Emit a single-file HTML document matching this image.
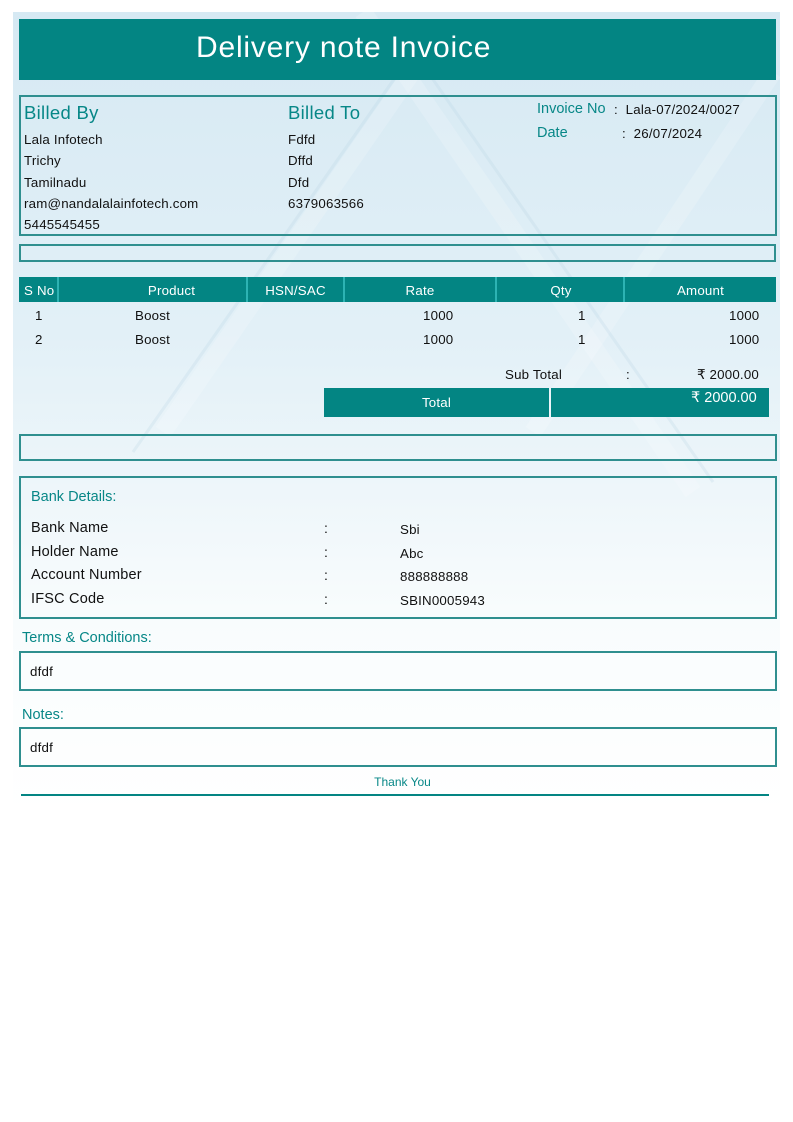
<!DOCTYPE html>
<html><head><meta charset="utf-8"><style>
*{margin:0;padding:0;box-sizing:border-box}
body{width:793px;height:1122px;background:#fff;position:relative;font-family:"Liberation Sans",sans-serif;color:#111;overflow:hidden}
.bg{position:absolute;left:13px;top:12px;width:767px;height:800px;background:linear-gradient(180deg,#d6e9f3 0%,#e2f0f7 40%,#eef6fa 60%,#f8fcfd 75%,#fff 100%)}
.a{position:absolute}
.teal{background:#038583}
.box{position:absolute;border:2px solid #2f8f8f}
.t{color:#078787}
.s{font-size:13.3px;letter-spacing:.2px}
</style></head><body>
<div class="bg"></div>
<svg class="a" style="left:13px;top:12px" width="767" height="600">
<g stroke="#ffffff" stroke-opacity=".18" stroke-width="18" fill="none">
<line x1="150" y1="420" x2="420" y2="30"/>
<line x1="350" y1="0" x2="680" y2="480"/>
<line x1="520" y1="420" x2="760" y2="60"/>
</g>
<g stroke="#b7d3e3" stroke-opacity=".25" stroke-width="3" fill="none">
<line x1="120" y1="440" x2="400" y2="40"/>
<line x1="380" y1="10" x2="700" y2="470"/>
</g>
</svg>
<div class="a teal" style="left:19px;top:19px;width:757px;height:61px"></div>
<div class="a" style="left:196px;top:31px;font-size:30px;letter-spacing:.8px;color:#fff">Delivery note Invoice</div>

<div class="box" style="left:19px;top:95px;width:758px;height:141px"></div>
<div class="a t" style="left:24px;top:102px;font-size:18.5px;letter-spacing:.3px">Billed By</div>
<div class="a s" style="left:24px;top:129px;line-height:21.3px">Lala Infotech<br>Trichy<br>Tamilnadu<br>ram@nandalalainfotech.com<br>5445545455</div>
<div class="a t" style="left:288px;top:102px;font-size:18.5px;letter-spacing:.3px">Billed To</div>
<div class="a s" style="left:288px;top:129px;line-height:21.3px">Fdfd<br>Dffd<br>Dfd<br>6379063566</div>
<div class="a t" style="left:537px;top:101px;font-size:14.5px">Invoice No</div>
<div class="a s" style="left:614px;top:102px">:&nbsp; Lala-07/2024/0027</div>
<div class="a t" style="left:537px;top:125px;font-size:14.5px">Date</div>
<div class="a s" style="left:622px;top:126px">:&nbsp; 26/07/2024</div>

<div class="box" style="left:19px;top:244px;width:757px;height:18px"></div>

<div class="a teal" style="left:19px;top:277px;width:757px;height:25px"></div>
<div class="a" style="left:57px;top:277px;width:2px;height:25px;background:#2db3b3"></div>
<div class="a" style="left:246px;top:277px;width:2px;height:25px;background:#2db3b3"></div>
<div class="a" style="left:343px;top:277px;width:2px;height:25px;background:#2db3b3"></div>
<div class="a" style="left:495px;top:277px;width:2px;height:25px;background:#2db3b3"></div>
<div class="a" style="left:623px;top:277px;width:2px;height:25px;background:#2db3b3"></div>
<div class="a s" style="left:19px;top:283px;width:757px;color:#fff;height:20px">
<span class="a" style="left:5px">S No</span>
<span class="a" style="left:59px;width:187px;text-align:center">Product</span>
<span class="a" style="left:229px;width:95px;text-align:center">HSN/SAC</span>
<span class="a" style="left:326px;width:150px;text-align:center">Rate</span>
<span class="a" style="left:478px;width:128px;text-align:center">Qty</span>
<span class="a" style="left:606px;width:151px;text-align:center">Amount</span>
</div>
<div class="a s" style="left:35px;top:308px">1</div>
<div class="a s" style="left:135px;top:308px">Boost</div>
<div class="a s" style="left:423px;top:308px">1000</div>
<div class="a s" style="left:578px;top:308px">1</div>
<div class="a s" style="left:729px;top:308px">1000</div>
<div class="a s" style="left:35px;top:332px">2</div>
<div class="a s" style="left:135px;top:332px">Boost</div>
<div class="a s" style="left:423px;top:332px">1000</div>
<div class="a s" style="left:578px;top:332px">1</div>
<div class="a s" style="left:729px;top:332px">1000</div>

<div class="a s" style="left:505px;top:367px">Sub Total</div>
<div class="a s" style="left:626px;top:367px">:</div>
<div class="a s" style="left:697px;top:367px">₹ 2000.00</div>
<div class="a teal" style="left:324px;top:388px;width:225px;height:29px"></div>
<div class="a teal" style="left:551px;top:388px;width:218px;height:29px"></div>
<div class="a s" style="left:324px;top:395px;width:225px;text-align:center;color:#fff">Total</div>
<div class="a" style="left:691px;top:390px;font-size:14.5px;color:#fff">₹ 2000.00</div>

<div class="box" style="left:19px;top:434px;width:758px;height:27px"></div>

<div class="box" style="left:19px;top:476px;width:758px;height:143px"></div>
<div class="a t" style="left:31px;top:489px;font-size:14.5px">Bank Details:</div>
<div class="a" style="left:31px;top:517px;font-size:14.5px;letter-spacing:.2px;line-height:23.7px">Bank Name<br>Holder Name<br>Account Number<br>IFSC Code</div>
<div class="a" style="left:324px;top:517px;font-size:14px;line-height:23.7px">:<br>:<br>:<br>:</div>
<div class="a s" style="left:400px;top:518px;line-height:23.7px">Sbi<br>Abc<br>888888888<br>SBIN0005943</div>

<div class="a t" style="left:22px;top:630px;font-size:14.5px">Terms &amp; Conditions:</div>
<div class="box" style="left:19px;top:651px;width:758px;height:40px"></div>
<div class="a s" style="left:30px;top:664px">dfdf</div>
<div class="a t" style="left:22px;top:707px;font-size:14.5px">Notes:</div>
<div class="box" style="left:19px;top:727px;width:758px;height:40px"></div>
<div class="a s" style="left:30px;top:740px">dfdf</div>
<div class="a t" style="left:0;top:775px;width:805px;text-align:center;font-size:12px">Thank You</div>
<div class="a" style="left:21px;top:794px;width:748px;height:2px;background:#038583"></div>
</body></html>
